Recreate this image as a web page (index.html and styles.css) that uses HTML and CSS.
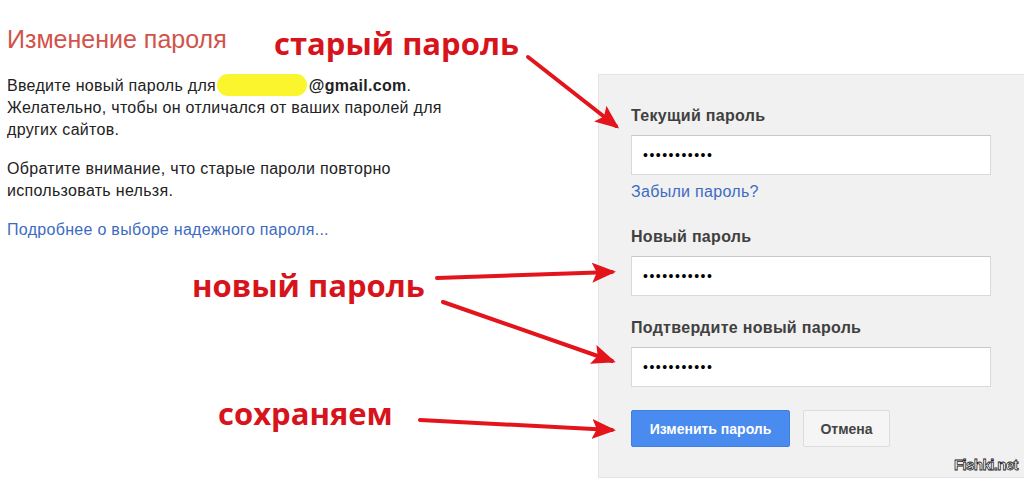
FILE: index.html
```html
<!DOCTYPE html>
<html lang="ru">
<head>
  <meta charset="UTF-8">
  <meta name="viewport" content="width=device-width, initial-scale=1.0">
  <title>Изменение пароля</title>
  <link rel="stylesheet" href="styles.css">
</head>
<body>
  <div class="page">
    <div class="intro">
      <h1>Изменение пароля</h1>
      <p>Введите новый пароль для <span class="hidden-mail"></span><b>@gmail.com</b>.<br>
        Желательно, чтобы он отличался от ваших паролей для<br>других сайтов.</p>
      <p>Обратите внимание, что старые пароли повторно<br>использовать нельзя.</p>
      <p><a href="#">Подробнее о выборе надежного пароля...</a></p>
    </div>

    <form class="panel">
      <div class="form-group first">
        <label for="current">Текущий пароль</label>
        <input type="password" id="current" value="12345678901">
        <a class="forgot" href="#">Забыли пароль?</a>
      </div>
      <div class="form-group">
        <label for="newpass">Новый пароль</label>
        <input type="password" id="newpass" value="12345678901">
      </div>
      <div class="form-group">
        <label for="confirm">Подтвердите новый пароль</label>
        <input type="password" id="confirm" value="12345678901">
      </div>
      <div class="buttons">
        <button type="submit" class="btn-primary">Изменить пароль</button>
        <button type="button" class="btn-cancel">Отмена</button>
      </div>
    </form>
  </div>

  <!-- annotations drawn over the screenshot -->
  <span class="note note-old">старый пароль</span>
  <span class="note note-new">новый пароль</span>
  <span class="note note-save">сохраняем</span>
  <svg class="arrows" width="1024" height="481" viewBox="0 0 1024 481">
    <defs>
      <marker id="head" markerWidth="6" markerHeight="5" refX="5" refY="2.5" orient="auto" markerUnits="strokeWidth">
        <path d="M0,0 L6,2.5 L0,5 L1.2,2.5 Z" fill="#e3141b"/>
      </marker>
    </defs>
    <g stroke="#e3141b" stroke-width="4" stroke-linecap="round" fill="none" marker-end="url(#head)">
      <line x1="528" y1="57" x2="616" y2="126"/>
      <line x1="437" y1="278" x2="612" y2="272"/>
      <line x1="443" y1="302" x2="612" y2="361"/>
      <line x1="420" y1="420" x2="612" y2="430"/>
    </g>
  </svg>
  <span class="watermark">Fishki.net</span>
</body>
</html>
```

FILE: styles.css
```css
body {
  margin: 0;
  background: #fff;
  font-family: "Liberation Sans", Arial, sans-serif;
  color: #222;
  overflow: hidden;
}
.page {
  display: flex;
  height: 481px;
}
.intro {
  width: 591px;
  padding-left: 7px;
  font-size: 16px;
  line-height: 22px;
  letter-spacing: 0.3px;
}
h1 {
  margin: 25px 0 21px;
  font-size: 25px;
  font-weight: normal;
  line-height: 28px;
  letter-spacing: 0;
  color: #d1534b;
}
.intro p {
  margin: 0 0 17px;
}
.hidden-mail {
  display: inline-block;
  width: 90px;
  height: 22px;
  margin: 0 2px -5px -4px;
  background: #faf52c;
  border-radius: 11px;
}
a {
  color: #3c6bc2;
  text-decoration: none;
}
.panel {
  flex: 1;
  margin-top: 74px;
  margin-bottom: 3px;
  padding: 32px 0 0 32px;
  background: #f1f1f1;
  border-top: 1px solid #e5e5e5;
  border-left: 1px solid #e3e3e3;
  border-bottom: 1px solid #e3e3e3;
}
.form-group {
  margin-bottom: 23px;
}
.form-group.first {
  margin-bottom: 27px;
}
label {
  display: block;
  margin-bottom: 10px;
  font-size: 16px;
  font-weight: bold;
  line-height: 18px;
  letter-spacing: 0.3px;
  color: #404040;
}
input {
  display: block;
  width: 360px;
  height: 40px;
  padding: 0 11px;
  box-sizing: border-box;
  border: 1px solid #d9d9d9;
  border-top-color: #c8c8c8;
  background: #fff;
  font-size: 14px;
  letter-spacing: 1.5px;
  color: #000;
}
.forgot {
  display: block;
  margin-top: 8px;
  font-size: 16px;
  line-height: 18px;
  letter-spacing: 0.3px;
}
.buttons {
  display: flex;
  gap: 13px;
  margin-top: 2px;
}
button {
  height: 37px;
  border-radius: 2px;
  font-family: inherit;
  font-size: 14px;
  font-weight: bold;
}
.btn-primary {
  width: 159px;
  background: #4a8bef;
  border: 1px solid #3f7fe4;
  color: #fff;
}
.btn-cancel {
  width: 87px;
  background: #f5f5f5;
  border: 1px solid #dcdcdc;
  color: #444;
}
.note {
  position: absolute;
  font-family: "Open Sans", sans-serif;
  font-weight: bold;
  font-size: 31px;
  line-height: 36px;
  color: #d7141c;
}
.note-old { left: 274px; top: 25px; }
.note-new { left: 192px; top: 267px; }
.note-save { left: 218px; top: 395px; }
.arrows {
  position: absolute;
  left: 0;
  top: 0;
}
.watermark {
  position: absolute;
  right: 6px;
  top: 456px;
  font-family: "Liberation Sans", sans-serif;
  font-weight: bold;
  font-size: 15px;
  color: #fff;
  -webkit-text-stroke: 0.8px #222;
  letter-spacing: -0.6px;
}
```
